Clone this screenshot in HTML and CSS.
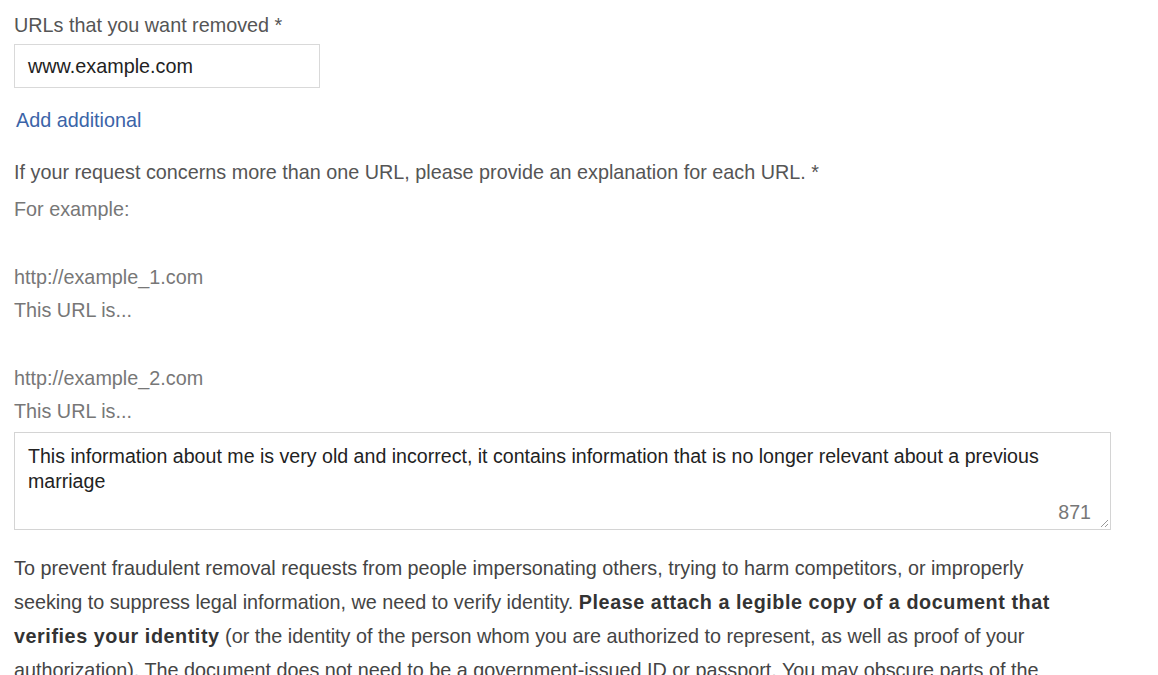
FILE: index.html
```html
<!DOCTYPE html>
<html>
<head>
<meta charset="utf-8">
<link rel="stylesheet" href="styles.css">
</head>
<body>
<form class="form">
  <div class="label">URLs that you want removed *</div>
  <div class="input">www.example.com</div>
  <a class="link" href="#">Add additional</a>
  <div class="label label-q">If your request concerns more than one URL, please provide an explanation for each URL. *</div>
  <div class="hint">
    <div class="hint-line">For example:</div>
    <div class="hint-gap"></div>
    <div class="hint-line">http://example_1.com</div>
    <div class="hint-line">This URL is...</div>
    <div class="hint-gap"></div>
    <div class="hint-line">http://example_2.com</div>
    <div class="hint-line">This URL is...</div>
  </div>
  <div class="textarea">
    <div class="ta-text">This information about me is very old and incorrect, it contains information that is no longer relevant about a previous marriage</div>
    <div class="ta-count">871</div>
    <svg class="grip" width="10" height="10" viewBox="0 0 10 10"><path d="M9 2 L2 9 M9 6 L6 9" stroke="#999" stroke-width="1" fill="none"/></svg>
  </div>
  <p class="para">To prevent fraudulent removal requests from people impersonating others, trying to harm competitors, or improperly seeking to suppress legal information, we need to verify identity. <b>Please attach a legible copy of a document that verifies your identity</b> (or the identity of the person whom you are authorized to represent, as well as proof of your authorization). The document does not need to be a government-issued ID or passport. You may obscure parts of the document (e.g., numbers) as long as the remaining information identifies you.</p>
</form>
</body>
</html>
```
FILE: styles.css
```css
html, body {
  margin: 0;
  padding: 0;
  background: #fff;
  overflow: hidden;
}
body {
  font-family: "Liberation Sans", Arial, sans-serif;
  font-size: 19.8px;
  color: #555;
}
.form {
  padding: 14px 0 0 14px;
  display: flex;
  flex-direction: column;
  align-items: flex-start;
}
.label {
  line-height: 22px;
  color: #555;
}
.input {
  margin-top: 8px;
  width: 278px;
  height: 42px;
  border: 1px solid #d9d9d9;
  padding: 0 13px;
  line-height: 42px;
  color: #222;
}
.link {
  margin-top: 21px;
  margin-left: 2px;
  color: #3b64a8;
  text-decoration: none;
  line-height: 22px;
}
.label-q {
  margin-top: 30px;
}
.hint {
  margin-top: 10px;
  color: #777;
}
.hint-line {
  line-height: 33px;
}
.hint-gap {
  height: 35px;
}
.textarea {
  position: relative;
  margin-top: 4px;
  width: 1069px;
  height: 96px;
  border: 1px solid #d4d4d4;
  padding: 0 13px;
  font-size: 19.6px;
}
.ta-text {
  margin-top: 11px;
  line-height: 25px;
  color: #222;
}
.ta-count {
  position: absolute;
  right: 19px;
  bottom: 6px;
  color: #777;
  line-height: 22px;
}
.grip {
  position: absolute;
  right: 1px;
  bottom: 1px;
}
.para {
  margin: 21px 0 0 0;
  width: 1070px;
  font-size: 19.8px;
  line-height: 34px;
  color: #444;
}
.para b {
  color: #333;
  letter-spacing: 0.55px;
}
```
